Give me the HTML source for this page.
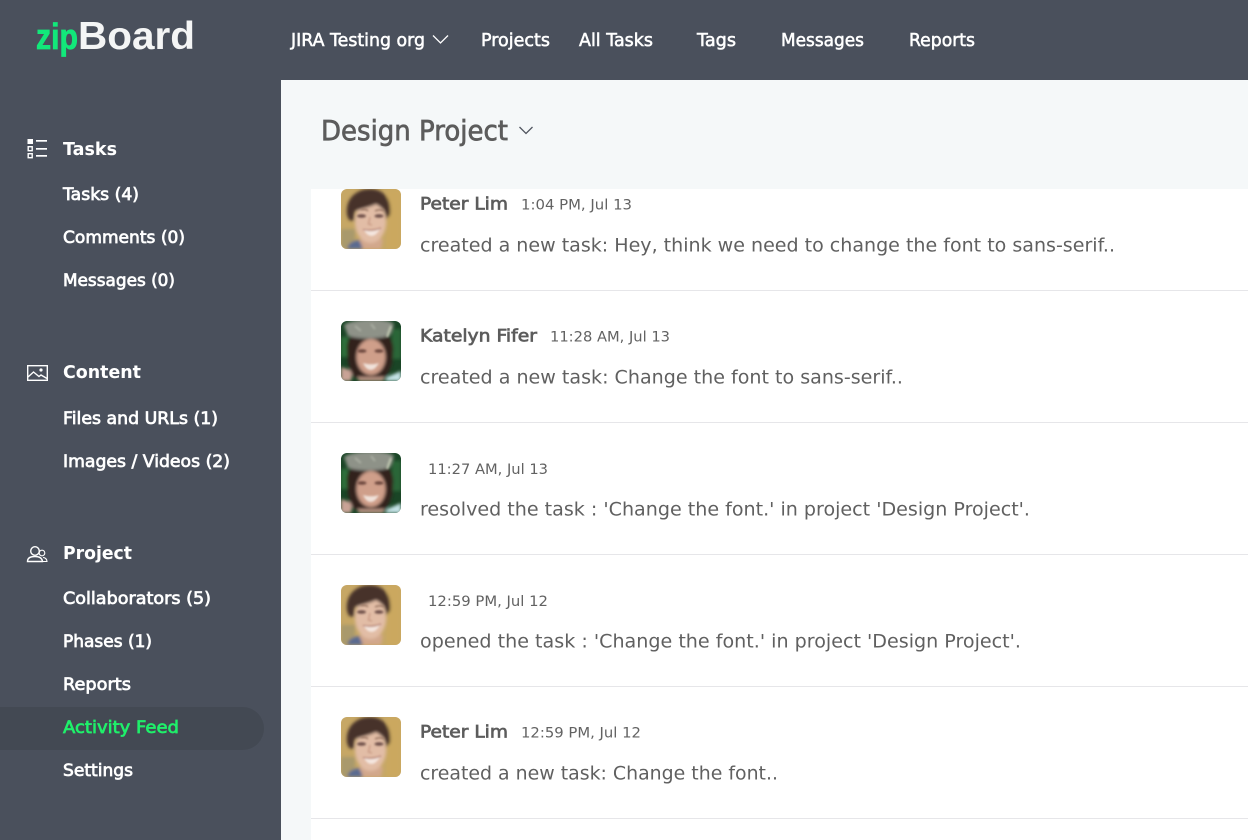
<!DOCTYPE html>
<html lang="en"><head><meta charset="utf-8"><title>zipBoard Activity Feed</title>
<style>
html,body{margin:0;padding:0;width:1248px;height:840px;overflow:hidden;background:#fff}
svg{display:block}
text{font-family:"DejaVu Sans",sans-serif}
.n{font-size:18px;fill:#fff;stroke:#fff;stroke-width:.55}
.h{font-size:18px;fill:#fff;font-weight:700}
.s{font-size:16.5px;fill:#fff;stroke:#fff;stroke-width:.7}
.u{font-size:17px;fill:#5c5c5c;stroke:#5c5c5c;stroke-width:.7}
.t{font-size:14.5px;fill:#626262}
.m{font-size:19px;fill:#606060}
.ic{fill:none;stroke:#fff;stroke-width:1.4}
</style></head><body>
<svg xmlns="http://www.w3.org/2000/svg" width="1248" height="840" viewBox="0 0 1248 840">
<defs>
<filter id="b" x="-20%" y="-20%" width="140%" height="140%"><feGaussianBlur stdDeviation="1.6"/></filter>
<filter id="b2" x="-30%" y="-30%" width="160%" height="160%"><feGaussianBlur stdDeviation="1"/></filter>
<clipPath id="r"><rect width="60" height="60" rx="6"/></clipPath>
<symbol id="man" viewBox="0 0 60 60" width="60" height="60"><g clip-path="url(#r)">
<rect width="60" height="60" fill="#c6a765"/>
<g filter="url(#b)">
<rect x="0" y="40" width="14" height="20" fill="#a9996c"/>
<rect x="46" y="0" width="14" height="60" fill="#cba85f"/>
<path d="M6 60Q8 52 18 51L26 60Z" fill="#5a6a90"/>
<path d="M18 50L42 50L40 60H22Z" fill="#d2a78c"/>
<ellipse cx="29.500" cy="33" rx="15.500" ry="21" fill="#e2bda6"/>
<path d="M6 26C4 9 16 0 29 0C42 0 51 9 49 26L45 30C45 23 42 19 35 15C29 18 20 20 14 22C13 25 13 28 13 32L8 31Z" fill="#46332a"/>
</g>
<g filter="url(#b2)">
<ellipse cx="20.500" cy="27" rx="4.500" ry="1.800" fill="#6e5048"/>
<ellipse cx="38" cy="27" rx="4.500" ry="1.800" fill="#6e5048"/>
<path d="M20 20.500Q25 19.500 27 22M34 22Q38 20 43 21.500" stroke="#8d6a58" stroke-width="1.400" fill="none"/>
<path d="M23 41Q31 43.500 39 40Q35 47 30.500 47Q26 47 23 41Z" fill="#f4e6df"/>
<path d="M22 40.500Q31 42.500 40 39" stroke="#a86e62" stroke-width="1.100" fill="none"/>
<path d="M29 28L27.500 35L31 36" stroke="#c99b85" stroke-width="1.500" fill="none"/>
</g></g></symbol>
<symbol id="wom" viewBox="0 0 60 60" width="60" height="60"><g clip-path="url(#r)">
<rect width="60" height="60" fill="#1a4526"/>
<g filter="url(#b)">
<rect x="0" y="16" width="7" height="20" fill="#2d6f3a"/>
<rect x="51" y="8" width="9" height="30" fill="#2a6638"/>
<path d="M0 46L12 50L10 60H0Z" fill="#c9a396"/>
<path d="M46 56L60 50V60H44Z" fill="#c4e2e6"/>
<path d="M6 28C5 14 18 9 30 9C44 9 54 16 52 32C52 44 48 52 44 57H14C8 50 6 40 6 28Z" fill="#30231f"/>
<ellipse cx="30" cy="36" rx="14.500" ry="18" fill="#cf9f8a"/>
<path d="M16 56L44 56L42 60H18Z" fill="#bb9484"/>
<path d="M3 4C12-3 46-4 53 3L49 14C38 19 18 18 7 15Z" fill="#8e9288"/>
</g>
<g filter="url(#b2)">
<ellipse cx="21" cy="30" rx="4.500" ry="1.800" fill="#6c463e"/>
<ellipse cx="38" cy="30" rx="4.500" ry="1.800" fill="#6c463e"/>
<path d="M22 42Q30 44.500 38 42Q34 49 30 49Q25 49 22 42Z" fill="#f0e2da"/>
<path d="M50 5L46 16" stroke="#c4ccb4" stroke-width="2"/>
<path d="M14 5L20 10M30 3L34 8" stroke="#a9ada1" stroke-width="2"/>
</g></g></symbol>
</defs>

<rect width="1248" height="840" fill="#f5f8f9"/>
<rect width="1248" height="80" fill="#4a505c"/>
<rect width="281" height="840" fill="#4a505c"/>
<rect x="311" y="189" width="937" height="651" fill="#fff"/>
<path d="M0 707H242.500a21.500 21.500 0 0 1 0 43H0Z" fill="#434953"/>

<!-- logo -->
<text x="36" y="49" style="font-family:'Liberation Sans',sans-serif;font-size:36px;font-weight:700;fill:#12e87a;stroke:#12e87a;stroke-width:.8" textLength="42" lengthAdjust="spacingAndGlyphs">zip</text>
<text x="78" y="49" style="font-family:'Liberation Sans',sans-serif;font-size:39px;font-weight:700;fill:#f4f5f5" textLength="117" lengthAdjust="spacingAndGlyphs">Board</text>

<!-- top nav -->
<text class="n" x="291" y="46" textLength="134" lengthAdjust="spacingAndGlyphs">JIRA Testing org</text>
<path d="M433 35.500L440.500 43L448 35.500" fill="none" stroke="#fff" stroke-width="1.300"/>
<text class="n" x="481" y="46" textLength="69" lengthAdjust="spacingAndGlyphs">Projects</text>
<text class="n" x="579" y="46" textLength="74" lengthAdjust="spacingAndGlyphs">All Tasks</text>
<text class="n" x="697" y="46" textLength="39" lengthAdjust="spacingAndGlyphs">Tags</text>
<text class="n" x="781" y="46" textLength="83" lengthAdjust="spacingAndGlyphs">Messages</text>
<text class="n" x="909" y="46" textLength="66" lengthAdjust="spacingAndGlyphs">Reports</text>

<!-- sidebar icons -->
<g fill="#fff">
<rect x="27.500" y="139" width="5.500" height="5"/>
<rect x="36" y="140" width="11" height="1.700"/><rect x="36" y="148" width="11" height="1.700"/><rect x="36" y="155" width="11" height="1.700"/>
</g>
<rect class="ic" x="28.200" y="146.700" width="4" height="4"/>
<rect class="ic" x="28.200" y="153.700" width="4" height="4"/>
<rect class="ic" x="27.700" y="365.700" width="19.600" height="14.600"/>
<path class="ic" d="M28 377L33.500 372L39 376.500L41 375L47 378.500"/>
<circle cx="41" cy="370" r="1.600" fill="#fff"/>
<circle class="ic" cx="35" cy="551" r="4.300"/>
<circle cx="42" cy="553" r="2.800" fill="none" stroke="#fff" stroke-width="1.100"/>
<path class="ic" d="M27.500 561.500C27.500 557.500 31 556.500 35 556.500C39 556.500 42 557.500 42.500 561.500Z"/>
<path d="M43 557.500C45 557.500 47 559 47 561.500H43" fill="none" stroke="#fff" stroke-width="1.100"/>

<!-- sidebar -->
<text class="h" x="63" y="155" textLength="54" lengthAdjust="spacingAndGlyphs">Tasks</text>
<text class="s" x="63" y="200" textLength="76" lengthAdjust="spacingAndGlyphs">Tasks (4)</text>
<text class="s" x="63" y="243" textLength="122" lengthAdjust="spacingAndGlyphs">Comments (0)</text>
<text class="s" x="63" y="286" textLength="112" lengthAdjust="spacingAndGlyphs">Messages (0)</text>
<text class="h" x="63" y="378" textLength="78" lengthAdjust="spacingAndGlyphs">Content</text>
<text class="s" x="63" y="424" textLength="155" lengthAdjust="spacingAndGlyphs">Files and URLs (1)</text>
<text class="s" x="63" y="467" textLength="167" lengthAdjust="spacingAndGlyphs">Images / Videos (2)</text>
<text class="h" x="63" y="559" textLength="69" lengthAdjust="spacingAndGlyphs">Project</text>
<text class="s" x="63" y="604" textLength="148" lengthAdjust="spacingAndGlyphs">Collaborators (5)</text>
<text class="s" x="63" y="647" textLength="89" lengthAdjust="spacingAndGlyphs">Phases (1)</text>
<text class="s" x="63" y="690" textLength="68" lengthAdjust="spacingAndGlyphs">Reports</text>
<text class="s" x="63" y="733" textLength="116" lengthAdjust="spacingAndGlyphs" style="fill:#1ff06a;stroke:#1ff06a">Activity Feed</text>
<text class="s" x="63" y="776" textLength="70" lengthAdjust="spacingAndGlyphs">Settings</text>

<!-- header -->
<text x="321" y="140" textLength="187" lengthAdjust="spacingAndGlyphs" style="font-size:27.500px;fill:#5c5c5c;stroke:#5c5c5c;stroke-width:.7">Design Project</text>
<path d="M519.500 127L526 133.500L532.500 127" fill="none" stroke="#50555f" stroke-width="1.300"/>

<!-- separators -->
<g fill="#e6e6e9">
<rect x="311" y="290" width="937" height="1"/>
<rect x="311" y="422" width="937" height="1"/>
<rect x="311" y="554" width="937" height="1"/>
<rect x="311" y="686" width="937" height="1"/>
<rect x="311" y="818" width="937" height="1"/>
</g>

<!-- rows -->
<use href="#man" x="341" y="189"/>
<text class="u" x="420" y="209.500" textLength="88" lengthAdjust="spacingAndGlyphs">Peter Lim</text>
<text class="t" x="521" y="209.500" textLength="111" lengthAdjust="spacingAndGlyphs">1:04 PM, Jul 13</text>
<text class="m" x="420" y="251.500" textLength="695" lengthAdjust="spacingAndGlyphs">created a new task: Hey, think we need to change the font to sans-serif..</text>

<use href="#wom" x="341" y="321"/>
<text class="u" x="420" y="341.500" textLength="117" lengthAdjust="spacingAndGlyphs">Katelyn Fifer</text>
<text class="t" x="550" y="341.500" textLength="120" lengthAdjust="spacingAndGlyphs">11:28 AM, Jul 13</text>
<text class="m" x="420" y="383.500" textLength="483" lengthAdjust="spacingAndGlyphs">created a new task: Change the font to sans-serif..</text>

<use href="#wom" x="341" y="453"/>
<text class="t" x="428" y="474" textLength="120" lengthAdjust="spacingAndGlyphs">11:27 AM, Jul 13</text>
<text class="m" x="420" y="515.500" textLength="610" lengthAdjust="spacingAndGlyphs">resolved the task : 'Change the font.' in project 'Design Project'.</text>

<use href="#man" x="341" y="585"/>
<text class="t" x="428" y="606" textLength="120" lengthAdjust="spacingAndGlyphs">12:59 PM, Jul 12</text>
<text class="m" x="420" y="647.500" textLength="601" lengthAdjust="spacingAndGlyphs">opened the task : 'Change the font.' in project 'Design Project'.</text>

<use href="#man" x="341" y="717"/>
<text class="u" x="420" y="737.500" textLength="88" lengthAdjust="spacingAndGlyphs">Peter Lim</text>
<text class="t" x="521" y="737.500" textLength="120" lengthAdjust="spacingAndGlyphs">12:59 PM, Jul 12</text>
<text class="m" x="420" y="779.500" textLength="358" lengthAdjust="spacingAndGlyphs">created a new task: Change the font..</text>
</svg>
</body></html>
